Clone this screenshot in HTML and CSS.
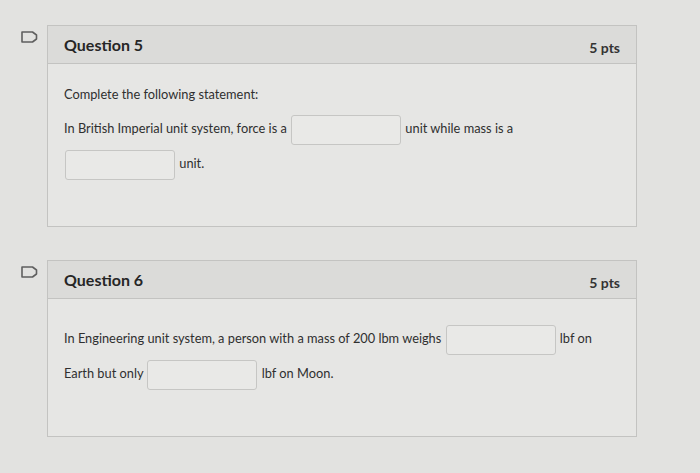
FILE: index.html
```html
<!DOCTYPE html>
<html lang="en">
  <head>
    <meta charset="UTF-8" />
    <meta name="viewport" content="width=device-width, initial-scale=1.0" />
    <title>Quiz</title>
    <link rel="stylesheet" href="styles.css">
  </head>
  <body>
    <div id="quiz">
      <div class="questionRow">
        <svg class="flag" width="17" height="12" viewBox="0 0 17 12">
          <path d="M1 1 H11.5 L15.5 4 V8 L11.5 11 H1 Z" />
        </svg>
        <div class="question">
          <div class="questionHeader">
            <h2>Question 5</h2>
            <div class="points">5 pts</div>
          </div>
          <div class="questionBody">
            <p class="intro">Complete the following statement:</p>
            <p class="blanks">
              In British Imperial unit system, force is a
              <input type="text" class="blank" />
              unit while mass is a
              <input type="text" class="blank" />
              unit.
            </p>
          </div>
        </div>
      </div>

      <div class="questionRow">
        <svg class="flag" width="17" height="12" viewBox="0 0 17 12">
          <path d="M1 1 H11.5 L15.5 4 V8 L11.5 11 H1 Z" />
        </svg>
        <div class="question">
          <div class="questionHeader">
            <h2>Question 6</h2>
            <div class="points">5 pts</div>
          </div>
          <div class="questionBody">
            <p class="blanks">
              In Engineering unit system, a person with a mass of 200 lbm weighs
              <input type="text" class="blank" />
              lbf on Earth but only
              <input type="text" class="blank" />
              lbf on Moon.
            </p>
          </div>
        </div>
      </div>
    </div>
  </body>
</html>
```

FILE: styles.css
```css
body {
  margin: 0;
  background-color: #e2e2e0;
  color: #2f2f2f;
  font-family: Lato, "Noto Sans", sans-serif;
}
#quiz {
  padding: 25px 0 0 21px;
  display: flex;
  flex-direction: column;
  gap: 33px;
}
.questionRow {
  display: flex;
  align-items: flex-start;
  gap: 9px;
}
.flag {
  margin-top: 6px;
  flex-shrink: 0;
}
.flag path {
  fill: none;
  stroke: #5f5f5f;
  stroke-width: 1.6;
  stroke-linejoin: round;
}
.question {
  width: 588px;
  border: 1px solid #c3c3c1;
  background-color: #e6e6e4;
}
.questionHeader {
  height: 37px;
  display: flex;
  align-items: center;
  justify-content: space-between;
  padding: 0 16px;
  background-color: #dbdbd9;
  border-bottom: 1px solid #c3c3c1;
}
.questionHeader h2 {
  margin: 0;
  font-size: 16px;
  font-weight: bold;
  color: #262626;
}
.points {
  font-size: 14px;
  font-weight: bold;
  color: #333;
  padding-top: 6px;
}
.questionBody {
  padding: 22px 16px 45px;
  font-size: 12.8px;
}
.intro {
  margin: 0 0 9px;
  line-height: 16px;
}
.blanks {
  margin: 0;
  line-height: 35px;
}
.blank {
  box-sizing: border-box;
  width: 110px;
  height: 30px;
  margin: 0 1px;
  padding: 0;
  border: 1px solid #c6c6c4;
  border-radius: 3px;
  background-color: #e9e9e7;
  vertical-align: middle;
}
```
